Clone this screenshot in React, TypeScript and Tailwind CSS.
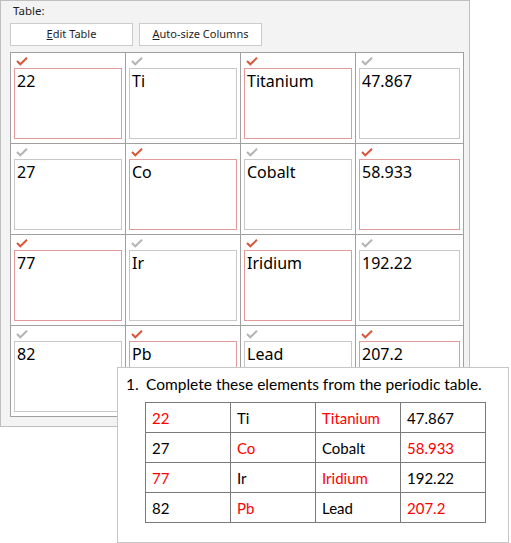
import React from "react";

type Cell = { v: string; red: boolean };

const rows: Cell[][] = [
  [{ v: "22", red: true }, { v: "Ti", red: false }, { v: "Titanium", red: true }, { v: "47.867", red: false }],
  [{ v: "27", red: false }, { v: "Co", red: true }, { v: "Cobalt", red: false }, { v: "58.933", red: true }],
  [{ v: "77", red: true }, { v: "Ir", red: false }, { v: "Iridium", red: true }, { v: "192.22", red: false }],
  [{ v: "82", red: false }, { v: "Pb", red: true }, { v: "Lead", red: false }, { v: "207.2", red: true }],
];

function Check({ red }: { red: boolean }) {
  return (
    <svg width="12" height="9" viewBox="0 0 12 9" className="block">
      <path
        d="M1 4 L4.3 7.3 L11 0.8"
        fill="none"
        stroke={red ? "#d6573b" : "#b4b4b4"}
        strokeWidth="2"
      />
    </svg>
  );
}

export default function App() {
  return (
    <div className="relative w-[511px] h-[543px] bg-white overflow-hidden" style={{ fontFamily: '"Noto Sans", sans-serif' }}>
      <div className="w-[470px] h-[427px] border border-[#bfbfbf] bg-[#f3f3f3] pt-[2px] pl-[9px]">
        <div className="ml-[3px] text-[11.5px] leading-[16px] text-[#1e1e1e]">Table:</div>
        <div className="mt-[4px] flex gap-[6px]">
          <div className="w-[123px] h-[23px] border border-[#cccccc] bg-white flex items-center justify-center text-[11px] text-[#1e1e1e]">
            <span><span className="underline">E</span>dit Table</span>
          </div>
          <div className="w-[123px] h-[23px] border border-[#cccccc] bg-white flex items-center justify-center text-[11px] text-[#1e1e1e]">
            <span><span className="underline">A</span>uto-size Columns</span>
          </div>
        </div>
        <div className="mt-[6px] w-fit grid grid-cols-[114px_114px_114px_107px] auto-rows-[90px] gap-px p-px bg-[#a0a0a0]">
          {rows.flat().map((c, i) => (
            <div key={i} className="bg-white flex flex-col px-[3px] pb-[4px]">
              <div className="h-[15px] pl-[2px] pt-[4px]">
                <Check red={c.red} />
              </div>
              <div className={`flex-1 border ${c.red ? "border-[#e09a9a]" : "border-[#c8c8c8]"} pl-[2px] pt-px text-[16px] leading-[22px] text-black`}>
                {c.v}
              </div>
            </div>
          ))}
        </div>
      </div>

      <div className="absolute left-[117px] top-[367px] w-[392px] h-[176px] border border-[#c6c6c6] bg-white" style={{ fontFamily: 'Lato, sans-serif' }}>
        <div className="flex text-[15.5px] leading-[20px] text-black pt-[6px]">
          <span className="w-[28px] pl-[8px]">1.</span>
          <span>Complete these elements from the periodic table.</span>
        </div>
        <table className="ml-[27px] mt-[8px] border-collapse text-[15px] leading-[20px]">
          <tbody>
            {rows.map((r, ri) => (
              <tr key={ri}>
                {r.map((c, ci) => (
                  <td
                    key={ci}
                    className={`border border-[#7a7a7a] h-[30px] w-[85px] p-0 pl-[6px] align-middle ${c.red ? "text-[#ff0000]" : "text-black"}`}
                  >
                    {c.v}
                  </td>
                ))}
              </tr>
            ))}
          </tbody>
        </table>
      </div>
    </div>
  );
}
